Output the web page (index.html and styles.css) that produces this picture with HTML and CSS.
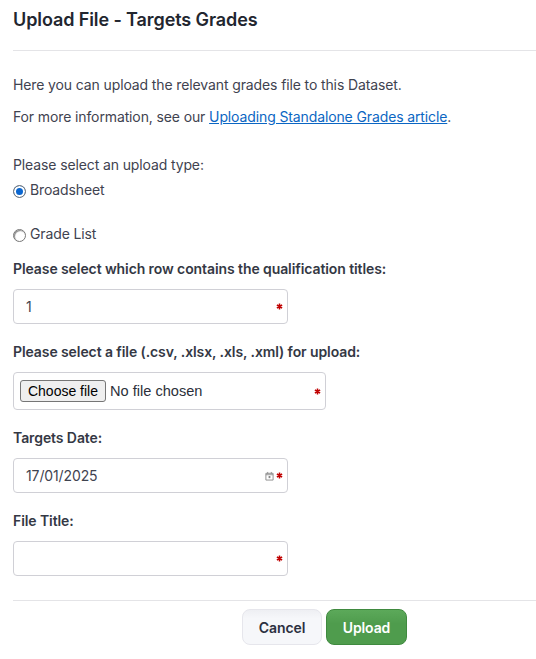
FILE: index.html
```html
<!DOCTYPE html>
<html>
<head>
	<title>Upload File - Targets Grades</title>
	<meta charset="utf-8">
	<meta name="viewport" content="width=device-width, initial-scale=1">

	<link rel="stylesheet" href="styles.css">
</head>
<body>

	<div class="main">
		<h1>Upload File - Targets Grades</h1>

		<div class="intro">
			<p>Here you can upload the relevant grades file to this Dataset.</p>
			<p>For more information, see our <a href="#">Uploading Standalone Grades article</a>.</p>
		</div>

		<form>
			<p class="type_label">Please select an upload type:</p>
			<label class="radio_row">
				<input type="radio" name="upload_type" checked>
				<span>Broadsheet</span>
			</label>
			<label class="radio_row second">
				<input type="radio" name="upload_type">
				<span>Grade List</span>
			</label>

			<label class="field_label first" for="row">Please select which row contains the qualification titles:</label>
			<div class="field">
				<input type="text" id="row" value="1">
				<svg class="required" viewBox="0 0 7 7" width="7" height="7"><path d="M3.5 .5v6M.9 2l5.2 3M6.1 2L.9 5"/></svg>
			</div>

			<label class="field_label" for="file">Please select a file (.csv, .xlsx, .xls, .xml) for upload:</label>
			<div class="field file_field">
				<button type="button" id="file" class="choose">Choose file</button>
				<span class="no_file">No file chosen</span>
				<svg class="required" viewBox="0 0 7 7" width="7" height="7"><path d="M3.5 .5v6M.9 2l5.2 3M6.1 2L.9 5"/></svg>
			</div>

			<label class="field_label" for="date">Targets Date:</label>
			<div class="field">
				<input type="text" id="date" value="17/01/2025">
				<svg class="calendar" viewBox="0 0 10 10" width="9" height="10">
					<path d="M1 2h8v7.5H1z M1 3.6h8 M3 .5v2 M7 .5v2" fill="none" stroke="#888" stroke-width="1"/>
					<rect x="4" y="5" width="2" height="2.4" fill="#888"/>
				</svg>
				<svg class="required" viewBox="0 0 7 7" width="7" height="7"><path d="M3.5 .5v6M.9 2l5.2 3M6.1 2L.9 5"/></svg>
			</div>

			<label class="field_label" for="title">File Title:</label>
			<div class="field">
				<input type="text" id="title">
				<svg class="required" viewBox="0 0 7 7" width="7" height="7"><path d="M3.5 .5v6M.9 2l5.2 3M6.1 2L.9 5"/></svg>
			</div>

			<div class="actions">
				<button type="button" class="btn cancel">Cancel</button>
				<button type="button" class="btn upload">Upload</button>
			</div>
		</form>
	</div>

</body>
</html>
```

FILE: styles.css
```css
* {
	box-sizing: border-box;
}

html, body {
	background: white;
}

body {
	font-family: Inter, "Liberation Sans", sans-serif;
	font-size: 14px;
	line-height: 20px;
	letter-spacing: -0.12px;
	color: #3f4350;
	margin: 0px;
	padding: 0px;
}

.main {
	padding-left: 13px;
}

h1 {
	margin: 0px;
	padding-top: 8px;
	height: 51px;
	font-size: 18px;
	line-height: 24px;
	font-weight: 600;
	letter-spacing: -0.1px;
	color: #22262f;
	border-bottom: 1px solid #e4e4e7;
}

p {
	margin: 0px;
}

.intro {
	padding-top: 24px;
}

.intro p {
	margin-bottom: 12px;
}

a {
	color: #0b66c3;
}

.type_label {
	margin-top: 28px;
}

.radio_row {
	display: flex;
	align-items: center;
	height: 20px;
	margin-top: 5px;
}

.radio_row.second {
	margin-top: 24px;
}

.radio_row input {
	appearance: none;
	width: 13px;
	height: 13px;
	margin: 3px 4px 0px 0px;
	border: 1px solid #777;
	border-radius: 50%;
	background: white;
	box-shadow: inset 1px 1px 1px #888;
}

.radio_row input:checked {
	background: #0a66d0;
	box-shadow: inset 0px 0px 0px 2px white;
}

.field_label {
	display: block;
	margin-top: 18px;
	margin-bottom: 10px;
	font-weight: 600;
	letter-spacing: -0.09px;
	color: #343844;
}

.field_label.first {
	margin-top: 15px;
}

.field {
	display: flex;
	align-items: center;
	width: 275px;
	height: 35px;
	padding: 0px 4px 0px 12px;
	border: 1px solid #d0d0d6;
	border-radius: 4px;
}

.field input {
	flex: 1;
	min-width: 0px;
	border: 0px;
	outline: 0px;
	padding: 0px;
	font: inherit;
	letter-spacing: inherit;
	color: #3f4350;
}

.required {
	flex: none;
	margin-left: 2px;
	fill: none;
	stroke: #c00000;
	stroke-width: 1.5;
}

.calendar {
	flex: none;
}

.file_field {
	width: 313px;
	height: 38px;
	padding-left: 6px;
	font-family: "Liberation Sans", sans-serif;
	font-size: 14.6px;
	letter-spacing: 0px;
}

.choose {
	width: 86px;
	height: 22px;
	padding: 0px;
	font: inherit;
	font-size: 14px;
	color: black;
	background: #efefef;
	border: 1px solid #767676;
	border-radius: 3px;
}

.no_file {
	flex: 1;
	margin-left: 4px;
	color: #2b2f3a;
}

.actions {
	display: flex;
	gap: 4px;
	margin-top: 24px;
	padding-top: 8px;
	padding-left: 229px;
	border-top: 1px solid #e4e4e7;
}

.btn {
	height: 36px;
	font-family: Inter, sans-serif;
	font-size: 14px;
	font-weight: 600;
	letter-spacing: -0.1px;
	border-radius: 8px;
}

.cancel {
	width: 80px;
	color: #2b3040;
	background: linear-gradient(#eeeff3, #f6f7fa 25%);
	border: 1px solid #e6e6ec;
}

.upload {
	width: 81px;
	color: white;
	background: linear-gradient(#5ca95a, #4f9c4d 40%);
	border: 1px solid #3f8a3f;
}
```
